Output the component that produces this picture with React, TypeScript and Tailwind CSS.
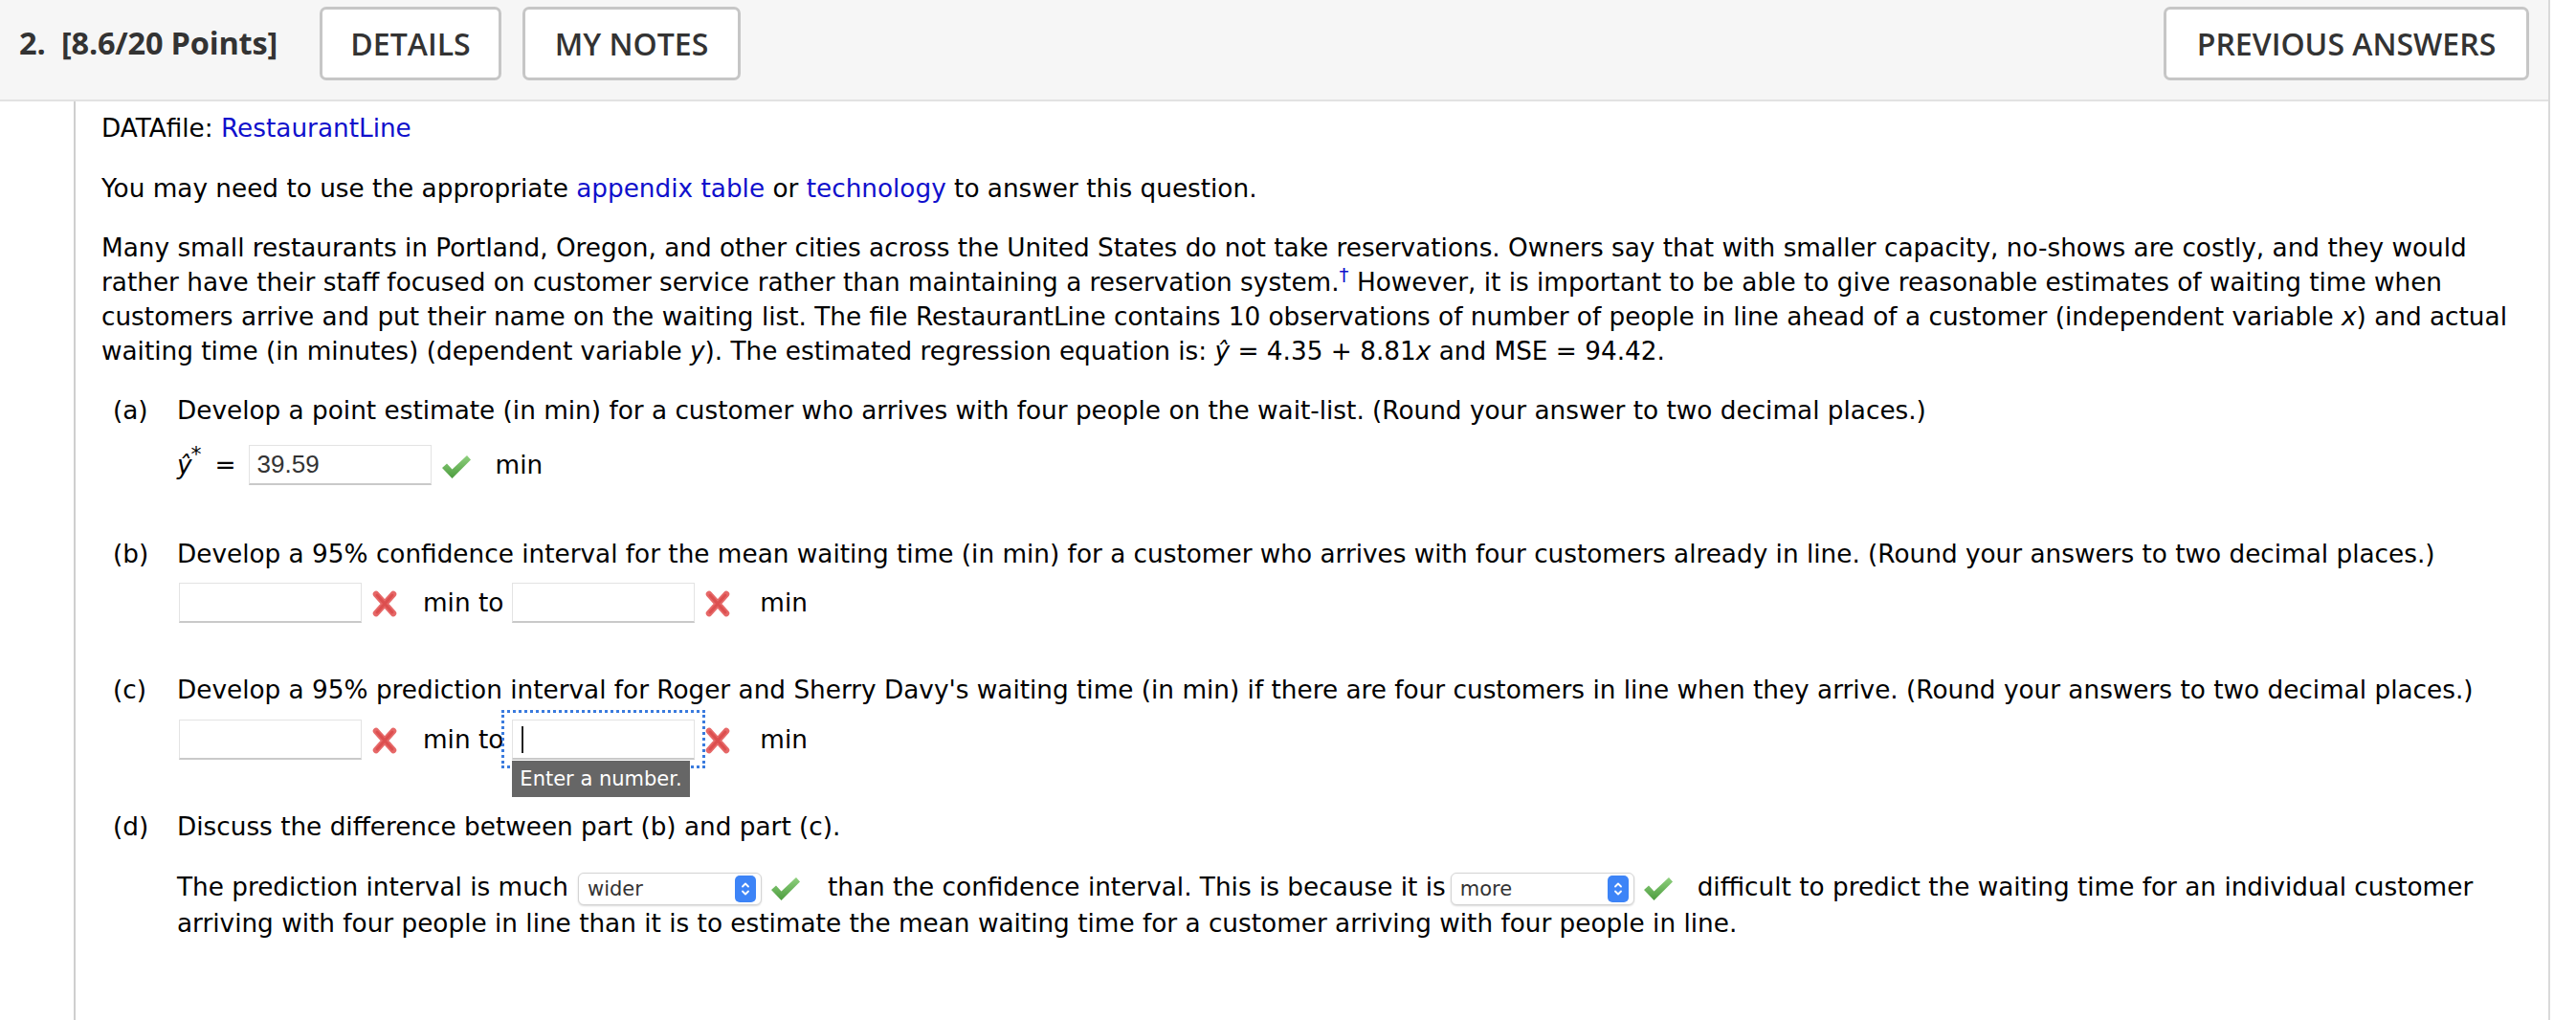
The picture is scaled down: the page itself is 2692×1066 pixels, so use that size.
import React from "react";

const Check = () => (
  <svg width="32" height="28" viewBox="0 0 32 28" className="shrink-0">
    <defs>
      <linearGradient id="cg" x1="0" y1="0" x2="0" y2="1">
        <stop offset="0" stopColor="#8fd07e" />
        <stop offset="1" stopColor="#4c9c3e" />
      </linearGradient>
    </defs>
    <path d="M1 15 L6 10.5 L11.5 16.5 L27 2 L31 6.5 L11.5 26 Z" fill="url(#cg)" />
  </svg>
);

const Cross = () => (
  <svg width="28" height="30" viewBox="0 0 28 30" className="shrink-0">
    <path d="M5 5 L23 25 M23 5 L5 25" stroke="#e66868" strokeWidth="6.5" strokeLinecap="round" />
    <path d="M6 6 L22 24 M22 6 L6 24" stroke="#dc4f4f" strokeWidth="3" strokeLinecap="round" />
  </svg>
);

const Stepper = () => (
  <span className="w-[22px] h-[28px] rounded-[5px] bg-[#3d84f7] flex items-center justify-center">
    <svg width="12" height="20" viewBox="0 0 12 20">
      <path d="M3 7.5 L6 4.5 L9 7.5 M3 12.5 L6 15.5 L9 12.5" stroke="#fff" strokeWidth="1.8" fill="none" strokeLinecap="round" strokeLinejoin="round" />
    </svg>
  </span>
);

const Select = ({ value }: { value: string }) => (
  <span className="inline-flex items-center justify-between w-[192px] h-[34px] rounded-[6px] border border-[#d4d4d4] bg-white shadow-[0_1px_2px_rgba(0,0,0,0.15)] pl-[9px] pr-[5px]">
    <span className="text-[21px] text-[#333]">{value}</span>
    <Stepper />
  </span>
);

const Input = ({ value, cursor }: { value?: string; cursor?: boolean }) => (
  <div className="w-[191px] h-[42px] bg-white border border-[#e3e3e3] border-b-[#c9c9c9] border-b-2 flex items-center pl-[8px] font-['Liberation_Sans',sans-serif] text-[26px] text-[#333]">
    {value}
    {cursor && <span className="w-[2px] h-[28px] bg-[#222] ml-[1px]" />}
  </div>
);

export default function App() {
  return (
    <div className="w-[2692px] h-[1066px] bg-white overflow-hidden font-['DejaVu_Sans',sans-serif] text-black">
      <div className="w-[2665px] h-full border-r-2 border-[#dadada] flex flex-col">
        <div className="h-[106px] shrink-0 bg-[#f6f6f6] border-b-2 border-[#e2e2e2] flex items-center pb-[13px] pl-[20px] pr-[20px] font-['Open_Sans',sans-serif] text-[#333]">
          <div className="text-[32.5px] font-bold whitespace-pre tracking-[-0.2px]">2.  [8.6/20 Points]</div>
          <div className="ml-[44px] w-[190px] h-[77px] bg-white border-[3px] border-[#c6c6c6] rounded-[7px] flex items-center justify-center text-[32px] font-semibold">DETAILS</div>
          <div className="ml-[22px] w-[228px] h-[77px] bg-white border-[3px] border-[#c6c6c6] rounded-[7px] flex items-center justify-center text-[32px] font-semibold">MY NOTES</div>
          <div className="ml-auto w-[382px] h-[77px] bg-white border-[3px] border-[#c6c6c6] rounded-[7px] flex items-center justify-center text-[32px] font-semibold">PREVIOUS ANSWERS</div>
        </div>
        <div className="flex flex-1">
          <div className="w-[77px] shrink-0" />
          <div className="flex-1 border-l-2 border-[#cfcfcf] pl-[27px] pt-[10px] text-[26.3px] leading-[36px]">
            <div>DATAfile: <span className="text-[#1010cc]">RestaurantLine</span></div>
            <div className="mt-[27px]">You may need to use the appropriate <span className="text-[#1010cc]">appendix table</span> or <span className="text-[#1010cc]">technology</span> to answer this question.</div>
            <div className="mt-[26px] whitespace-nowrap">
              <div>Many small restaurants in Portland, Oregon, and other cities across the United States do not take reservations. Owners say that with smaller capacity, no-shows are costly, and they would</div>
              <div>rather have their staff focused on customer service rather than maintaining a reservation system.<sup className="text-[#1010cc] text-[20px]">†</sup> However, it is important to be able to give reasonable estimates of waiting time when</div>
              <div>customers arrive and put their name on the waiting list. The file RestaurantLine contains 10 observations of number of people in line ahead of a customer (independent variable <i>x</i>) and actual</div>
              <div>waiting time (in minutes) (dependent variable <i>y</i>). The estimated regression equation is: <i>ŷ</i> = 4.35 + 8.81<i>x</i> and MSE = 94.42.</div>
            </div>

            {/* (a) */}
            <div className="mt-[26px] pl-[12px] flex whitespace-nowrap">
              <span className="w-[67px]">(a)</span>
              <span>Develop a point estimate (in min) for a customer who arrives with four people on the wait-list. (Round your answer to two decimal places.)</span>
            </div>
            <div className="mt-[17px] pl-[79px] flex items-center h-[43px]">
              <span className="italic">ŷ</span><sup className="text-[22px] -ml-[1px]">*</sup>
              <span className="ml-[14px]">=</span>
              <div className="ml-[13px]"><Input value="39.59" /></div>
              <div className="ml-[10px] mt-[4px]"><Check /></div>
              <span className="ml-[25px]">min</span>
            </div>

            {/* (b) */}
            <div className="mt-[54px] pl-[12px] flex whitespace-nowrap">
              <span className="w-[67px]">(b)</span>
              <span>Develop a 95% confidence interval for the mean waiting time (in min) for a customer who arrives with four customers already in line. (Round your answers to two decimal places.)</span>
            </div>
            <div className="mt-[12px] pl-[81px] flex items-center h-[42px]">
              <Input />
              <div className="ml-[10px] mt-[2px]"><Cross /></div>
              <span className="ml-[26px]">min to</span>
              <div className="ml-[9px]"><Input /></div>
              <div className="ml-[10px] mt-[2px]"><Cross /></div>
              <span className="ml-[30px]">min</span>
            </div>

            {/* (c) */}
            <div className="mt-[52px] pl-[12px] flex whitespace-nowrap">
              <span className="w-[67px]">(c)</span>
              <span>Develop a 95% prediction interval for Roger and Sherry Davy's waiting time (in min) if there are four customers in line when they arrive. (Round your answers to two decimal places.)</span>
            </div>
            <div className="mt-[13px] pl-[81px] flex items-center h-[42px]">
              <Input />
              <div className="ml-[10px] mt-[2px]"><Cross /></div>
              <span className="ml-[26px]">min to</span>
              <div className="ml-[9px] relative">
                <Input cursor />
                <div className="absolute left-[-11px] right-[-11px] top-[-10px] bottom-[-9px] border-[3px] border-dotted border-[#3a7bde] pointer-events-none" />
                <div className="absolute left-0 top-[43px] w-[186px] h-[38px] bg-[#666666] text-white text-[21px] leading-[38px] pl-[8px] whitespace-nowrap z-10">Enter a number.</div>
              </div>
              <div className="ml-[10px] mt-[2px]"><Cross /></div>
              <span className="ml-[30px]">min</span>
            </div>

            {/* (d) */}
            <div className="mt-[52px] pl-[12px] flex whitespace-nowrap">
              <span className="w-[67px]">(d)</span>
              <span>Discuss the difference between part (b) and part (c).</span>
            </div>
            <div className="mt-[27px] pl-[79px] whitespace-nowrap">
              <div className="flex items-center h-[36px]">
                <span>The prediction interval is much</span>
                <span className="ml-[10px]"><Select value="wider" /></span>
                <span className="ml-[9px] mt-[4px]"><Check /></span>
                <span className="ml-[28px]">than the confidence interval. This is because it is</span>
                <span className="ml-[5px]"><Select value="more" /></span>
                <span className="ml-[9px] mt-[4px]"><Check /></span>
                <span className="ml-[25px]">difficult to predict the waiting time for an individual customer</span>
              </div>
              <div className="mt-[2px]">arriving with four people in line than it is to estimate the mean waiting time for a customer arriving with four people in line.</div>
            </div>
          </div>
        </div>
      </div>
    </div>
  );
}
